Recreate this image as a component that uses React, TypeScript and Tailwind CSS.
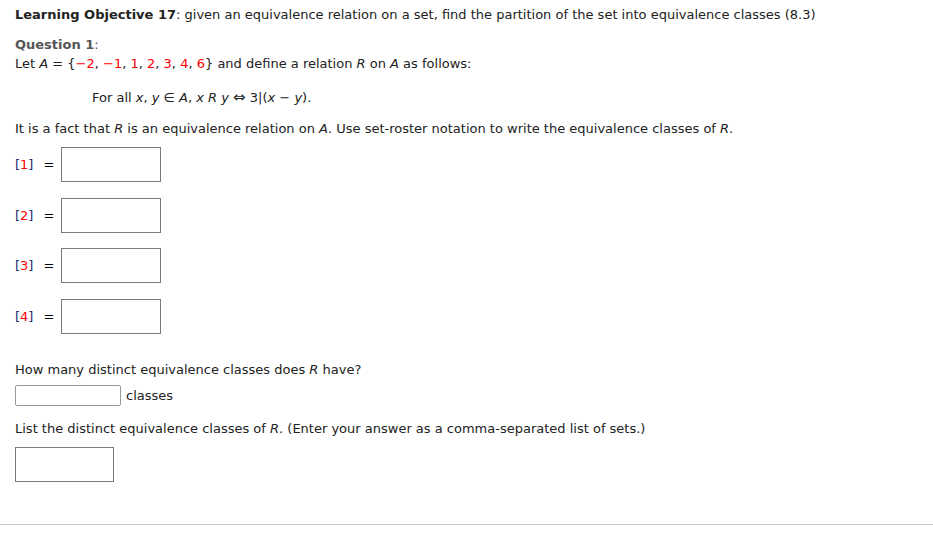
import React from "react";

const Red = ({ children }: { children: React.ReactNode }) => (
  <span className="text-[#ff0000]">{children}</span>
);

const I = ({ children }: { children: React.ReactNode }) => <i>{children}</i>;

const ClassRow = ({ n }: { n: number }) => (
  <div className="flex items-center h-[35px]">
    <span className="w-[46px]">
      <span className="text-[#1a2a6c]">[</span>
      <Red>{n}</Red>
      <span className="text-[#1a2a6c]">]</span>
      <span className="ml-[10px] text-black">=</span>
    </span>
    <div className="w-[100px] h-[35px] border border-[#7a7a7a] bg-white" />
  </div>
);

export default function App() {
  return (
    <div
      className="w-[933px] h-[542px] bg-white text-[13px] text-[#222] leading-[19px] relative"
      style={{ fontFamily: "Verdana, 'DejaVu Sans', sans-serif" }}
    >
      <div className="px-[15px] pt-[5px]">
        <p>
          <b>Learning Objective 17</b>: given an equivalence relation on a set, find the
          partition of the set into equivalence classes (8.3)
        </p>
        <p className="mt-[11px] text-[#555]">
          <b>Question 1</b>:
        </p>
        <p className="text-[#222]">
          Let <I>A</I> = {"{"}
          <Red>−2</Red>, <Red>−1</Red>, <Red>1</Red>, <Red>2</Red>, <Red>3</Red>, <Red>4</Red>,{" "}
          <Red>6</Red>
          {"}"} and define a relation <I>R</I> on <I>A</I> as follows:
        </p>
        <p className="mt-[15px] ml-[77px]">
          For all <I>x</I>, <I>y</I> ∈ <I>A</I>, <I>x</I> <I>R</I> <I>y</I>{" "}
          <span className="text-[15px]">⇔</span> 3|(<I>x</I> − <I>y</I>).
        </p>
        <p className="mt-[12px]">
          It is a fact that <I>R</I> is an equivalence relation on <I>A</I>. Use set-roster notation
          to write the equivalence classes of <I>R</I>.
        </p>
        <div className="mt-[9px] flex flex-col gap-[15.5px]">
          <ClassRow n={1} />
          <ClassRow n={2} />
          <ClassRow n={3} />
          <ClassRow n={4} />
        </div>
        <p className="mt-[26px]">
          How many distinct equivalence classes does <I>R</I> have?
        </p>
        <div className="mt-[6px] flex items-center gap-[5px]">
          <div className="w-[106px] h-[21px] border border-[#9a9a9a] rounded-[2px] bg-white" />
          <span>classes</span>
        </div>
        <p className="mt-[13px]">
          List the distinct equivalence classes of <I>R</I>. (Enter your answer as a
          comma-separated list of sets.)
        </p>
        <div className="mt-[9px] w-[99px] h-[35px] border border-[#7a7a7a] bg-white" />
      </div>
      <div className="absolute left-0 right-0 top-[524px] h-px bg-[#cccccc]" />
    </div>
  );
}
